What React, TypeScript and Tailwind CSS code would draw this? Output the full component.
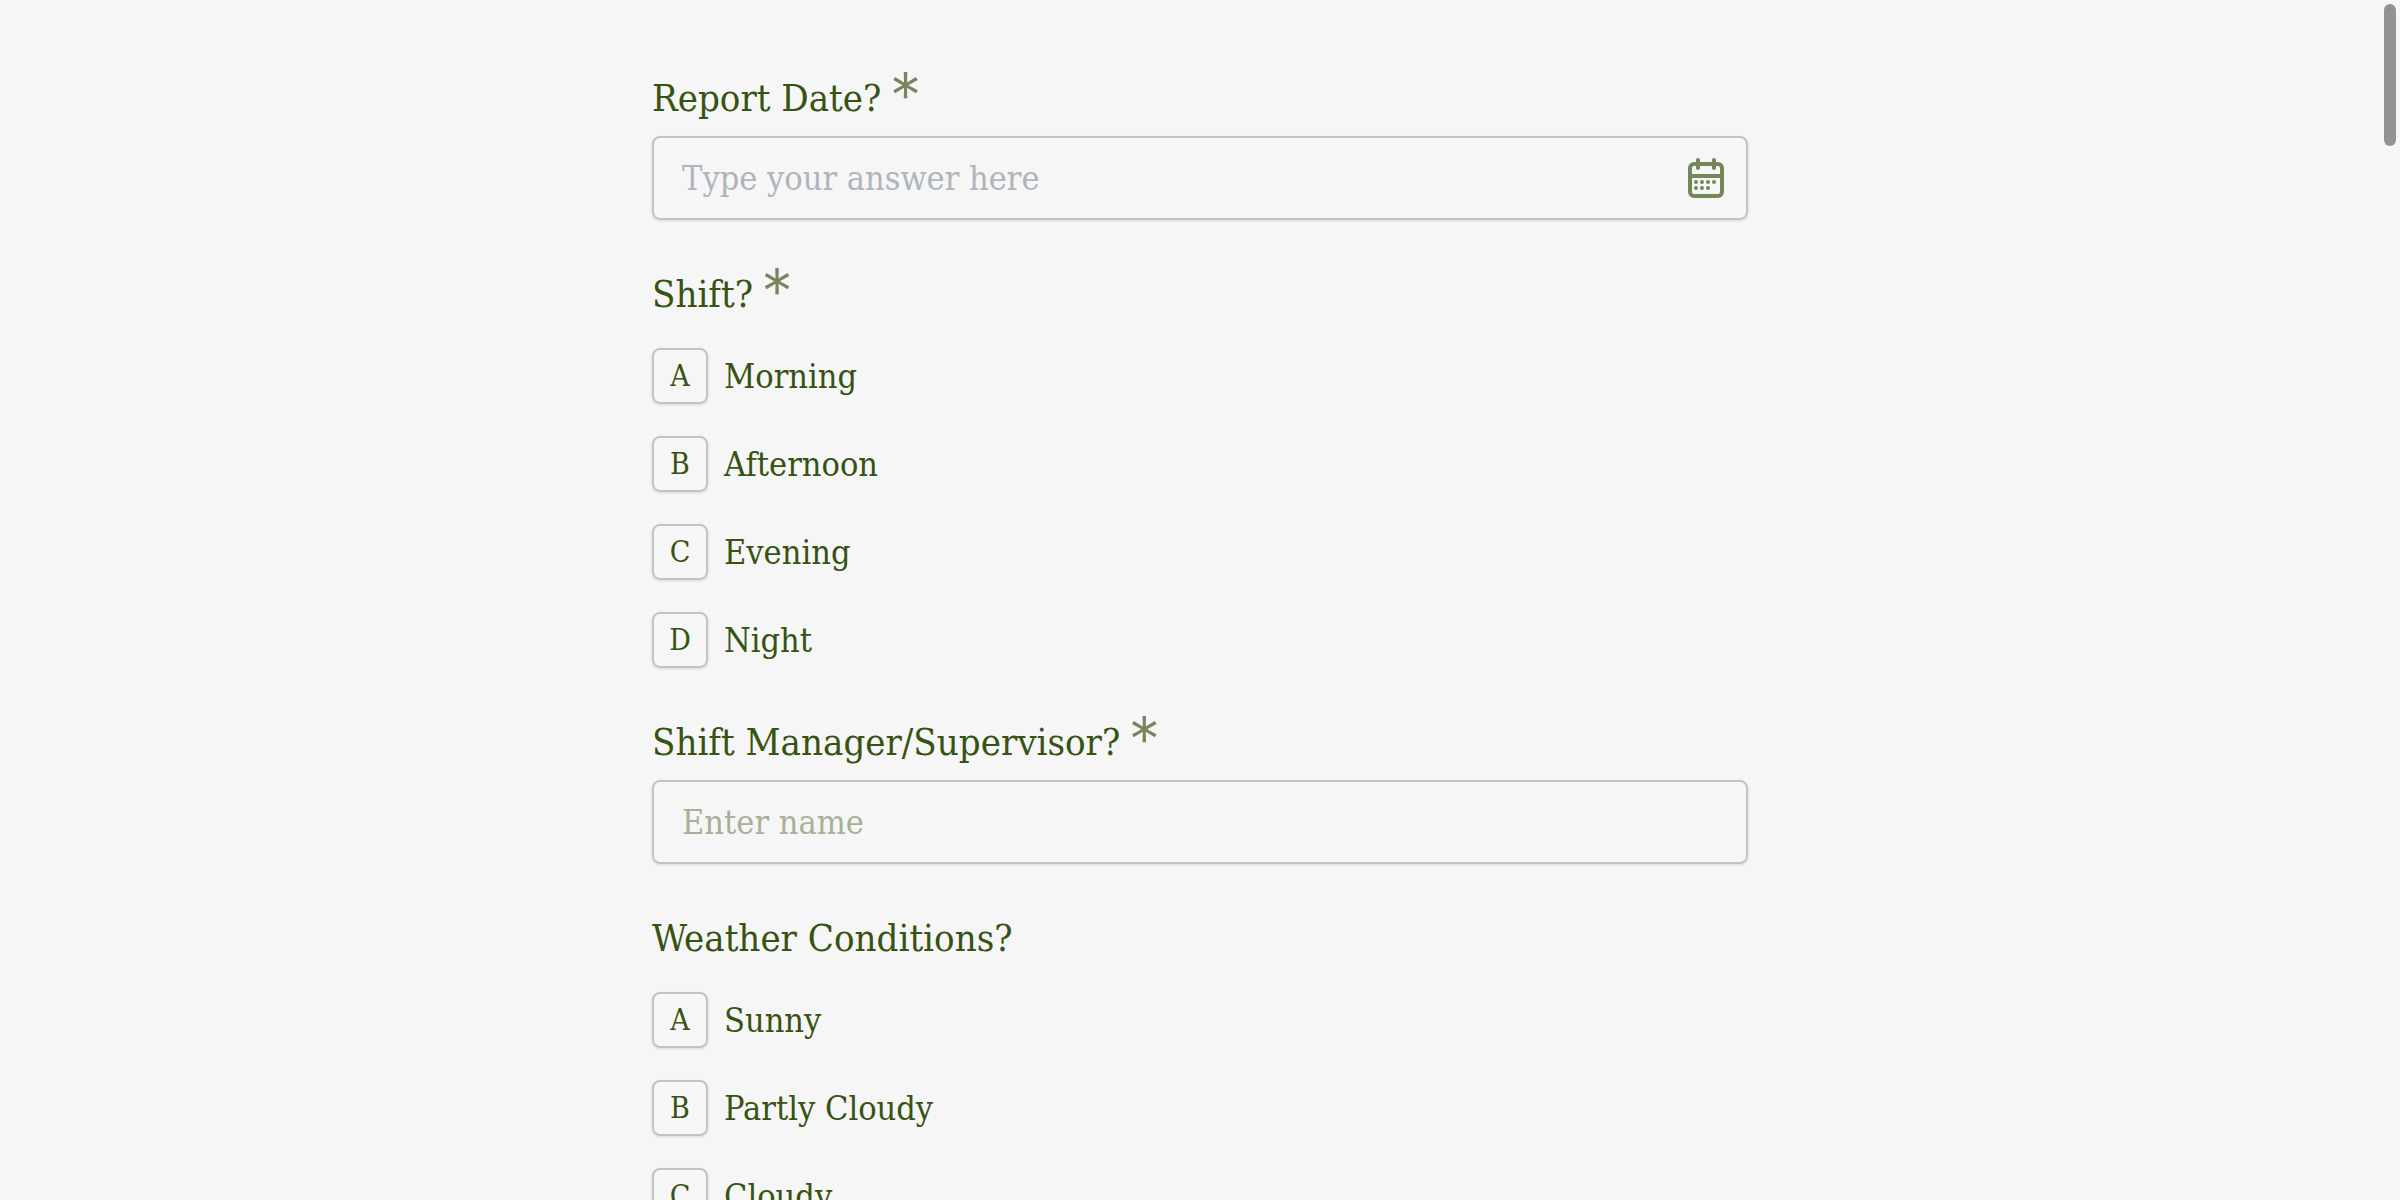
import React, { useState } from 'react';

interface Option {
  key: string;
  label: string;
}

const shifts: Option[] = [
  { key: 'A', label: 'Morning' },
  { key: 'B', label: 'Afternoon' },
  { key: 'C', label: 'Evening' },
  { key: 'D', label: 'Night' },
];

const weather: Option[] = [
  { key: 'A', label: 'Sunny' },
  { key: 'B', label: 'Partly Cloudy' },
  { key: 'C', label: 'Cloudy' },
];

const RequiredMark: React.FC = () => (
  <span
    aria-hidden="true"
    className="ml-2 font-['Inter',sans-serif] text-[64px] leading-12 font-light text-[#748760]"
  >
    *
  </span>
);

const CalendarIcon: React.FC = () => (
  <svg viewBox="0 0 40 40" className="size-10" fill="none" stroke="currentColor" strokeWidth="4" strokeLinecap="round">
    <rect x="4" y="6" width="32" height="32" rx="4" />
    <path d="M12 2v8M28 2v8M4 18h32" />
    <g fill="currentColor" stroke="none">
      <circle cx="10" cy="24" r="2" />
      <circle cx="16" cy="24" r="2" />
      <circle cx="22" cy="24" r="2" />
      <circle cx="28" cy="24" r="2" />
      <circle cx="10" cy="30" r="2" />
      <circle cx="16" cy="30" r="2" />
      <circle cx="22" cy="30" r="2" />
    </g>
  </svg>
);

interface ChoiceGroupProps {
  name: string;
  title: string;
  required?: boolean;
  options: Option[];
}

const ChoiceGroup: React.FC<ChoiceGroupProps> = ({ name, title, required, options }) => {
  const [selected, setSelected] = useState('');

  return (
    <section role="radiogroup" aria-labelledby={`${name}-title`}>
      <h2 id={`${name}-title`} className="flex h-14 text-[38px] leading-13">
        {title}
        {required && <RequiredMark />}
      </h2>
      <div className="mt-6 flex flex-col items-start gap-8">
        {options.map((option) => (
          <label key={option.key} className="flex h-14 cursor-pointer items-center gap-4 text-[34px] leading-14">
            <span className="grid place-items-center">
              <input
                type="radio"
                name={name}
                value={option.label}
                checked={selected === option.label}
                onChange={() => setSelected(option.label)}
                className="col-start-1 row-start-1 size-14 appearance-none rounded-lg border-2 border-[#c1c7b8] shadow-sm checked:border-[#375313]"
              />
              <span className="pointer-events-none col-start-1 row-start-1 text-[30px] leading-14">{option.key}</span>
            </span>
            {option.label}
          </label>
        ))}
      </div>
    </section>
  );
};

export default function App() {
  const [date, setDate] = useState('');
  const [manager, setManager] = useState('');

  return (
    <div className="h-screen overflow-y-auto bg-[#f6f6f6] font-['DejaVu_Serif_Condensed','DejaVu_Serif',serif] text-[#375313] [scrollbar-width:none]">
      <form className="mx-auto flex max-w-[1096px] flex-col gap-12 pt-18">
        {/* Report date */}
        <section>
          <label htmlFor="report-date" className="flex h-14 text-[38px] leading-13">
            Report Date?
            <RequiredMark />
          </label>
          <div className="mt-2 flex h-21 items-center rounded-lg border-2 border-[#c1c7b8] pr-5 shadow-sm">
            <input
              id="report-date"
              type="text"
              value={date}
              onChange={(e) => setDate(e.target.value)}
              placeholder="Type your answer here"
              className="h-full min-w-0 flex-1 bg-transparent px-7 text-[34px] outline-none placeholder:text-[#adb5bd]"
            />
            <button type="button" aria-label="Open calendar" className="text-[#73875a]">
              <CalendarIcon />
            </button>
          </div>
        </section>

        <ChoiceGroup name="shift" title="Shift?" required options={shifts} />

        {/* Shift manager */}
        <section>
          <label htmlFor="manager" className="flex h-14 text-[38px] leading-13">
            Shift Manager/Supervisor?
            <RequiredMark />
          </label>
          <input
            id="manager"
            type="text"
            value={manager}
            onChange={(e) => setManager(e.target.value)}
            placeholder="Enter name"
            className="mt-2 block h-21 w-full rounded-lg border-2 border-[#c1c7b8] bg-transparent px-7 text-[34px] shadow-sm outline-none placeholder:text-[#a7b198]"
          />
        </section>

        <ChoiceGroup name="weather" title="Weather Conditions?" options={weather} />
      </form>

      {/* Scroll thumb */}
      <div className="fixed top-1 right-1 h-[142px] w-3 rounded-full bg-[#929292]" />
    </div>
  );
}
